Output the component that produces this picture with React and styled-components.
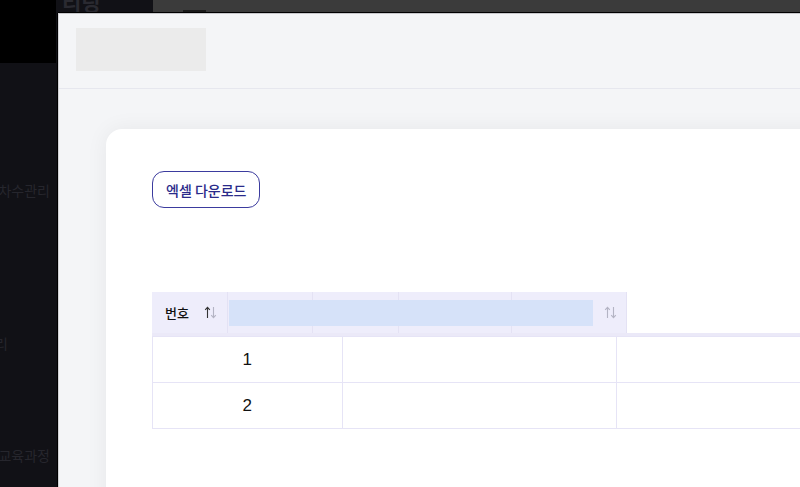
import styled, { createGlobalStyle } from 'styled-components';

const GlobalStyle = createGlobalStyle`
  html, body {
    margin: 0;
    padding: 0;
    width: 800px;
    height: 487px;
    overflow: hidden;
    background: #111116;
    font-family: 'Noto Sans CJK KR', 'Noto Sans', sans-serif;
  }
`;

const Page = styled.div`
  position: relative;
  display: flex;
  width: 800px;
  height: 487px;
  overflow: hidden;
`;

const Sidebar = styled.aside`
  width: 153px;
  flex-shrink: 0;
  background: #111116;
  display: flex;
  flex-direction: column;
`;

const Brand = styled.div`
  display: flex;
  height: 63px;
`;

const LogoBox = styled.div`
  width: 56px;
  height: 63px;
  background: #000;
`;

const BrandTitle = styled.div`
  margin-top: -14px;
  margin-left: 6px;
  font-size: 21px;
  font-weight: 700;
  color: #2a2a31;
  white-space: nowrap;
`;

const Menu = styled.nav`
  display: flex;
  flex-direction: column;
`;

const MenuItem = styled.div`
  width: ${(props) => props.$end}px;
  display: flex;
  justify-content: flex-end;
  white-space: nowrap;
  font-size: 14px;
  color: #26262d;
  margin-top: ${(props) => props.$top}px;
  line-height: 20px;
`;

const Main = styled.main`
  flex: 1;
  display: flex;
  flex-direction: column;
`;

const TopBar = styled.div`
  height: 63px;
  background: #3b3b3b;
  display: flex;
  padding-left: 30px;
`;

const TopMark = styled.div`
  margin-top: 10px;
  width: 23px;
  height: 4px;
  background: #1a1a1a;
`;

const Modal = styled.div`
  position: absolute;
  left: 58px;
  top: 13px;
  width: 800px;
  height: 600px;
  background: #f4f5f7;
  border-left: 1px solid #d2d2d6;
  border-top: 1px solid #c8c8cc;
  box-shadow: 0 -1px 0 #000, -1px 0 0 #000;
  display: flex;
  flex-direction: column;
`;

const ModalHeader = styled.header`
  flex-shrink: 0;
  height: 75px;
  box-sizing: border-box;
  padding: 14px 0 0 17px;
  border-bottom: 1px solid #e6e7ee;
`;

const Placeholder = styled.div`
  width: 130px;
  height: 43px;
  background: #ebebeb;
`;

const ModalBody = styled.div`
  flex: 1;
  padding: 40px 0 0 47px;
`;

const Card = styled.section`
  background: #fff;
  border-radius: 16px;
  height: 460px;
  padding: 42px 0 0 46px;
  box-shadow: 0 0 22px rgba(20, 20, 40, 0.06);
`;

const ExcelButton = styled.button`
  height: 37px;
  padding: 0 13px;
  border: 1px solid #3b3b9e;
  border-radius: 12px;
  background: #fff;
  color: #2a2a8a;
  font-family: 'Noto Sans CJK KR', sans-serif;
  font-size: 14px;
  font-weight: 500;
  cursor: pointer;
`;

const TableWrap = styled.div`
  margin-top: 84px;
  width: 760px;
`;

const HeadRow = styled.div`
  position: relative;
  display: flex;
  height: 41px;
  border-bottom: 3px solid #ebe9f8;
`;

const HeadCell = styled.div`
  width: ${(props) => props.$w}px;
  box-sizing: border-box;
  background: #eeedfb;
  border-right: 1px solid #e4e2f4;
  display: flex;
  align-items: center;
  justify-content: ${(props) => (props.$end ? 'flex-end' : 'flex-start')};
  padding: ${(props) => (props.$end ? '0 9px 0 0' : '0 0 0 13px')};
  gap: 15px;
  font-size: 13px;
  font-weight: 500;
  color: #111;
`;

const Highlight = styled.div`
  position: absolute;
  left: 77px;
  top: 8px;
  width: 364px;
  height: 26px;
  background: #d6e2f9;
`;

const BodyRow = styled.div`
  display: flex;
  height: 45px;
  border-bottom: 1px solid #e6e4f6;
  border-left: 1px solid #e6e4f6;
  &:first-of-type {
    border-top: 1px solid #e6e4f6;
  }
`;

const Cell = styled.div`
  width: ${(props) => props.$w}px;
  box-sizing: border-box;
  border-right: 1px solid #e6e4f6;
  display: flex;
  align-items: center;
  justify-content: center;
  font-family: 'Liberation Sans', Arial, sans-serif;
  font-size: 17px;
  color: #111;
`;

const Body = styled.div`
  margin-top: 0;
`;

function SortIcon({ active }) {
  const up = active ? '#333' : '#b4b4c4';
  return (
    <svg width='13' height='13' viewBox='0 0 13 13'>
      <path d='M3.5 12V1.5M1.2 3.8L3.5 1.3L5.8 3.8' stroke={up} strokeWidth='1.1' fill='none' />
      <path d='M9.5 1V11.5M7.2 9.2L9.5 11.7L11.8 9.2' stroke='#b4b4c4' strokeWidth='1.1' fill='none' />
    </svg>
  );
}

export default function App() {
  return (
    <Page>
      <GlobalStyle />
      <Sidebar>
        <Brand>
          <LogoBox />
          <BrandTitle>리팅</BrandTitle>
        </Brand>
        <Menu>
          <MenuItem $top={117} $end={50}>교육차수관리</MenuItem>
          <MenuItem $top={133} $end={8}>회원관리</MenuItem>
          <MenuItem $top={92} $end={50}>교육과정</MenuItem>
        </Menu>
      </Sidebar>
      <Main>
        <TopBar>
          <TopMark />
        </TopBar>
      </Main>
      <Modal>
        <ModalHeader>
          <Placeholder />
        </ModalHeader>
        <ModalBody>
          <Card>
            <ExcelButton type='button'>엑셀 다운로드</ExcelButton>
            <TableWrap>
              <HeadRow>
                <HeadCell $w={76}>
                  번호 <SortIcon active />
                </HeadCell>
                <HeadCell $w={85} />
                <HeadCell $w={86} />
                <HeadCell $w={113} />
                <HeadCell $w={115} $end>
                  <SortIcon />
                </HeadCell>
                <Highlight />
              </HeadRow>
              <Body>
                {[1, 2].map((n) => (
                  <BodyRow key={n}>
                    <Cell $w={193}>{n}</Cell>
                    <Cell $w={280} />
                    <Cell $w={300} />
                  </BodyRow>
                ))}
              </Body>
            </TableWrap>
          </Card>
        </ModalBody>
      </Modal>
    </Page>
  );
}
